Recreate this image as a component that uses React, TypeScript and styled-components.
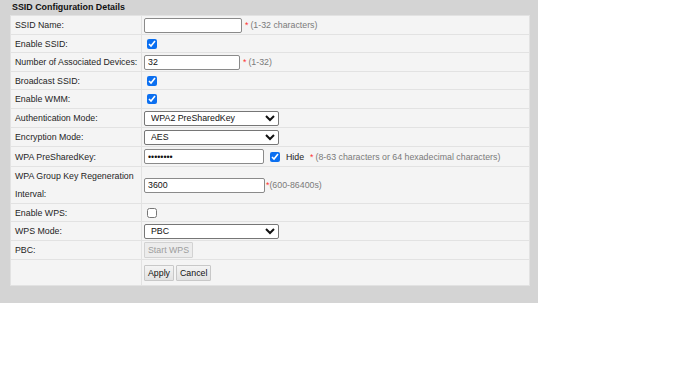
import React from "react";
import styled, { createGlobalStyle } from "styled-components";

const GlobalStyle = createGlobalStyle`
  html, body {
    margin: 0;
    padding: 0;
    background: #ffffff;
  }
  body {
    font-family: "Liberation Sans", Arial, sans-serif;
  }
`;

const Panel = styled.div`
  width: 538px;
  height: 303px;
  box-sizing: border-box;
  padding: 0 8px 0 10px;
  background: #d4d4d4;
`;

const Title = styled.div`
  height: 15px;
  line-height: 15px;
  padding-left: 2px;
  font-size: 8.9px;
  font-weight: bold;
  color: #111;
`;

const Table = styled.table`
  width: 520px;
  border-collapse: separate;
  border-spacing: 1px;
  background: #e2e2e2;
  font-size: 8.8px;
  color: #1e1e1e;
`;

const Row = styled.tr<{ $h?: number }>`
  height: ${(p) => p.$h ?? 18}px;
`;

const Label = styled.td<{ $tall?: boolean }>`
  width: 125px;
  padding: 0 1px 0 4px;
  background: #f4f4f4;
  vertical-align: middle;
  white-space: ${(p) => (p.$tall ? "normal" : "nowrap")};
  line-height: ${(p) => (p.$tall ? 18 : 12)}px;
`;

const Value = styled.td`
  padding: 0 2px;
  background: #f4f4f4;
  vertical-align: middle;
  white-space: nowrap;
  line-height: 12px;
`;

const Field = styled.div<{ $gap?: number }>`
  display: flex;
  align-items: center;
  gap: ${(p) => p.$gap ?? 3}px;
`;

const TextInput = styled.input<{ $w: number }>`
  display: block;
  width: ${(p) => p.$w}px;
  height: 15px;
  box-sizing: border-box;
  margin: 0;
  padding: 0 3px;
  border: 1px solid #8a8a8a;
  border-radius: 2px;
  background: #fff;
  font-family: "Liberation Sans", Arial, sans-serif;
  font-size: 8.8px;
  color: #111;
`;

const Select = styled.select<{ $w: number }>`
  display: block;
  width: ${(p) => p.$w}px;
  height: 15px;
  box-sizing: border-box;
  margin: 0;
  padding: 0 2px;
  border: 1px solid #767676;
  border-radius: 2px;
  background: #fff;
  font-family: "Liberation Sans", Arial, sans-serif;
  font-size: 8.8px;
  color: #111;
`;

const Check = styled.input`
  display: block;
  width: 10px;
  height: 10px;
  margin: 0 3px;
  accent-color: #0b6ff0;
`;

const Hint = styled.span`
  color: #7a7a7a;
`;

const Star = styled.span<{ $tight?: boolean }>`
  color: #ff3333;
  margin-right: ${(p) => (p.$tight ? 0 : 2)}px;
`;

const HideLabel = styled.span`
  color: #222;
  margin-right: 3px;
`;

const Btn = styled.button`
  display: block;
  height: 16px;
  margin: 0;
  padding: 0 3px;
  border: 1px solid #c8c8c8;
  border-radius: 1px;
  background: linear-gradient(#f4f4f4, #e2e2e2);
  font-family: "Liberation Sans", Arial, sans-serif;
  font-size: 8.8px;
  color: #111;
  &:disabled {
    color: #9d9d9d;
    background: #ececec;
    border-color: #d2d2d2;
  }
`;

export default function App() {
  return (
    <>
      <GlobalStyle />
      <Panel>
        <Title>SSID Configuration Details</Title>
        <Table>
          <tbody>
            <Row>
              <Label>SSID Name:</Label>
              <Value>
                <Field>
                  <TextInput $w={98} defaultValue="" />
                  <Hint>
                    <Star>*</Star>(1-32 characters)
                  </Hint>
                </Field>
              </Value>
            </Row>
            <Row $h={17}>
              <Label>Enable SSID:</Label>
              <Value>
                <Check type="checkbox" defaultChecked />
              </Value>
            </Row>
            <Row>
              <Label>Number of Associated Devices:</Label>
              <Value>
                <Field>
                  <TextInput $w={96} defaultValue="32" />
                  <Hint>
                    <Star>*</Star>(1-32)
                  </Hint>
                </Field>
              </Value>
            </Row>
            <Row $h={17}>
              <Label>Broadcast SSID:</Label>
              <Value>
                <Check type="checkbox" defaultChecked />
              </Value>
            </Row>
            <Row>
              <Label>Enable WMM:</Label>
              <Value>
                <Check type="checkbox" defaultChecked />
              </Value>
            </Row>
            <Row>
              <Label>Authentication Mode:</Label>
              <Value>
                <Select $w={135} defaultValue="WPA2 PreSharedKey">
                  <option>WPA2 PreSharedKey</option>
                </Select>
              </Value>
            </Row>
            <Row>
              <Label>Encryption Mode:</Label>
              <Value>
                <Select $w={135} defaultValue="AES">
                  <option>AES</option>
                </Select>
              </Value>
            </Row>
            <Row $h={19}>
              <Label>WPA PreSharedKey:</Label>
              <Value>
                <Field>
                  <TextInput $w={120} type="password" defaultValue="12345678" />
                  <Check type="checkbox" defaultChecked />
                  <HideLabel>Hide</HideLabel>
                  <Hint>
                    <Star>*</Star>(8-63 characters or 64 hexadecimal characters)
                  </Hint>
                </Field>
              </Value>
            </Row>
            <Row $h={36}>
              <Label $tall>WPA Group Key Regeneration Interval:</Label>
              <Value>
                <Field $gap={1}>
                  <TextInput $w={121} defaultValue="3600" />
                  <Hint>
                    <Star $tight>*</Star>(600-86400s)
                  </Hint>
                </Field>
              </Value>
            </Row>
            <Row $h={17}>
              <Label>Enable WPS:</Label>
              <Value>
                <Check type="checkbox" />
              </Value>
            </Row>
            <Row>
              <Label>WPS Mode:</Label>
              <Value>
                <Select $w={135} defaultValue="PBC">
                  <option>PBC</option>
                </Select>
              </Value>
            </Row>
            <Row>
              <Label>PBC:</Label>
              <Value>
                <Btn disabled>Start WPS</Btn>
              </Value>
            </Row>
            <Row $h={25}>
              <Label />
              <Value>
                <Field $gap={2}>
                  <Btn>Apply</Btn>
                  <Btn>Cancel</Btn>
                </Field>
              </Value>
            </Row>
          </tbody>
        </Table>
      </Panel>
    </>
  );
}
